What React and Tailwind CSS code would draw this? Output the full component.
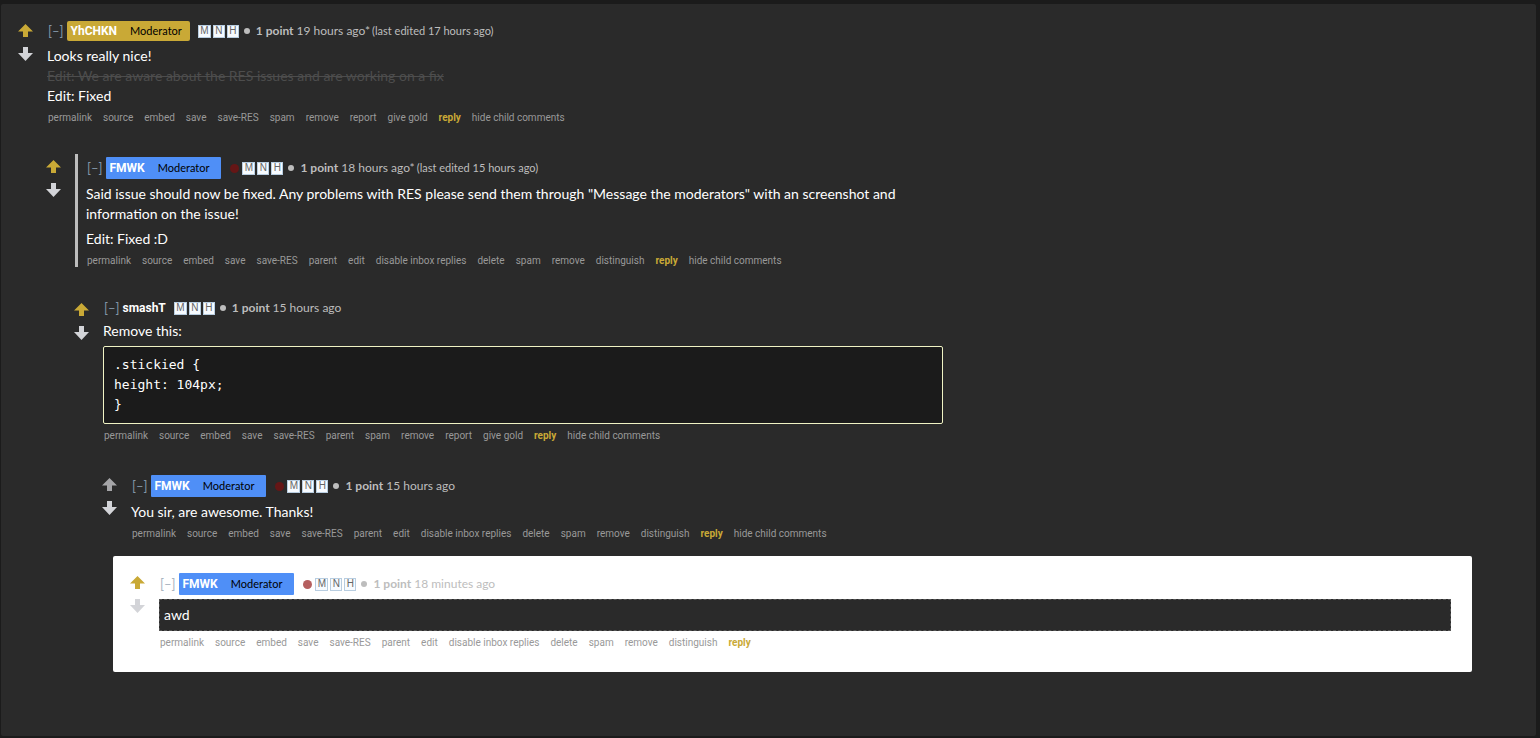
const MOD_ACTIONS = ['permalink', 'source', 'embed', 'save', 'save-RES', 'parent', 'edit', 'disable inbox replies', 'delete', 'spam', 'remove', 'distinguish', 'reply'];

const THREAD = {
  author: 'YhCHKN',
  badge: 'gold',
  time: '19 hours ago*',
  edited: '(last edited 17 hours ago)',
  vote: 'up',
  body: (
    <p>
      Looks really nice!
      <br />
      <del className="text-[#4d4d4d]">Edit: We are aware about the RES issues and are working on a fix</del>
      <br />
      Edit: Fixed
    </p>
  ),
  actions: ['permalink', 'source', 'embed', 'save', 'save-RES', 'spam', 'remove', 'report', 'give gold', 'reply', 'hide child comments'],
  child: {
    author: 'FMWK',
    badge: 'blue',
    tagged: true,
    barred: true,
    time: '18 hours ago*',
    edited: '(last edited 15 hours ago)',
    vote: 'up',
    body: (
      <>
        <p>
          Said issue should now be fixed. Any problems with RES please send them through "Message the moderators" with
          an screenshot and information on the issue!
        </p>
        <p>Edit: Fixed :D</p>
      </>
    ),
    actions: [...MOD_ACTIONS, 'hide child comments'],
    child: {
      author: 'smashT',
      time: '15 hours ago',
      vote: 'up',
      body: (
        <>
          <p>Remove this:</p>
          <pre className="rounded-xs border border-[#f0f3c4] bg-[#1b1b1b] px-[10px] py-2 font-['DejaVu_Sans_Mono',monospace] text-[13px] leading-5">
            {'.stickied {\nheight: 104px;\n}'}
          </pre>
        </>
      ),
      actions: ['permalink', 'source', 'embed', 'save', 'save-RES', 'parent', 'spam', 'remove', 'report', 'give gold', 'reply', 'hide child comments'],
      child: {
        author: 'FMWK',
        badge: 'blue',
        tagged: true,
        time: '15 hours ago',
        vote: 'none',
        body: <p>You sir, are awesome. Thanks!</p>,
        actions: [...MOD_ACTIONS, 'hide child comments'],
        child: {
          author: 'FMWK',
          badge: 'blue',
          tagged: true,
          isNew: true,
          time: '18 minutes ago',
          vote: 'up',
          body: <p>awd</p>,
          actions: MOD_ACTIONS,
        },
      },
    },
  },
};

const MOD_TOOLS = [
  { letter: 'M', width: 'w-[13px]' },
  { letter: 'N', width: 'w-[12px]' },
  { letter: 'H', width: 'w-[12px]' },
];

function Arrow({ down, className }) {
  return (
    <svg width="15" height="14" viewBox="0 0 15 14" className={className} fill="currentColor" aria-hidden="true">
      <path d={down ? 'M5 0h5v6h5L7.5 14 0 6h5z' : 'M7.5 0 15 7.5h-5V13H5V7.5H0z'} />
    </svg>
  );
}

function Votes({ vote }) {
  return (
    <div className="flex w-[15px] shrink-0 flex-col gap-[9px] pt-[3px]">
      <button type="button" aria-label="upvote">
        <Arrow className={vote === 'up' ? 'text-[#c9a936]' : 'text-[#a5a5a8]'} />
      </button>
      <button type="button" aria-label="downvote">
        <Arrow down className="text-[#d3d4d8]" />
      </button>
    </div>
  );
}

function Author({ name, badge }) {
  if (!badge) {
    return (
      <a href="#user" className="ml-[3px] font-['Roboto',sans-serif] font-bold text-white">
        {name}
      </a>
    );
  }
  return (
    <span
      className={
        badge === 'gold'
          ? 'ml-[3px] flex h-5 items-center gap-[13px] rounded-xs bg-[#c9a936] pr-2 pl-1'
          : 'ml-[3px] flex h-[22px] items-center gap-[13px] rounded-[1px] bg-[#4f8ff7] pr-3 pl-1'
      }
    >
      <a href="#user" className="font-['Roboto',sans-serif] font-bold text-white">
        {name}
      </a>
      <span className="text-[11px] text-black">Moderator</span>
    </span>
  );
}

function Tagline({ comment }) {
  const faded = comment.isNew;
  return (
    <div className="flex items-center pl-px text-[12px] leading-4 whitespace-nowrap text-[#bdbdbd]">
      <button type="button" className={faded ? 'text-[13px] text-[#a9b4c0]' : 'text-[13px] text-[#8296a8]'}>
        [–]
      </button>
      <Author name={comment.author} badge={comment.badge} />
      {comment.tagged && (
        <span className={faded ? 'ml-[9px] size-[9px] rounded-full bg-[#b55f5f]' : 'ml-[9px] size-[9px] rounded-full bg-[#651616]'} />
      )}
      <span
        className={
          comment.tagged
            ? "ml-[3px] flex gap-[2px] font-['Liberation_Sans',sans-serif] text-[10px] leading-none"
            : "ml-2 flex gap-[2px] font-['Liberation_Sans',sans-serif] text-[10px] leading-none"
        }
      >
        {MOD_TOOLS.map(({ letter, width }) => (
          <a
            key={letter}
            href="#mod"
            className={`flex h-[13px] items-center justify-center border border-[#b8cde0] bg-[#f7fbff] text-[#666] ${width}`}
          >
            {letter}
          </a>
        ))}
      </span>
      <span className="ml-[5px] size-[6px] rounded-full bg-[#bdbdbd]" />
      <span className="ml-[6px] font-bold">1 point</span>
      <time className="ml-[3px]">{comment.time}</time>
      {comment.edited && <span className="ml-[2px] text-[11px]">{comment.edited}</span>}
    </div>
  );
}

function Actions({ items }) {
  return (
    <ul className="flex flex-wrap gap-x-[11px] pt-[5px] pl-px font-['Roboto',sans-serif] text-[10px] leading-[13px] text-[#999]">
      {items.map((item) => (
        <li key={item}>
          <a href="#action" className={item === 'reply' ? 'font-bold text-[#c9a936]' : ''}>
            {item}
          </a>
        </li>
      ))}
    </ul>
  );
}

function Comment({ comment }) {
  return (
    <article>
      <div className={comment.isNew ? 'mt-4 -ml-[17px] flex gap-[14px] rounded-xs bg-white pt-[17px] pr-[21px] pb-[23px] pl-[17px]' : 'flex gap-[14px]'}>
        <Votes vote={comment.vote} />
        <div className={comment.barred ? '-mt-[3px] min-w-0 flex-1 border-l-[3px] border-[#bdbdbd] pt-[3px] pl-2' : 'min-w-0 flex-1'}>
          <Tagline comment={comment} />
          <div
            className={
              comment.isNew
                ? 'mt-1 border border-dashed border-[#555] bg-[#2a2a2a] px-1 py-[5px] text-[14px] leading-5 text-white'
                : 'mt-[5px] flex max-w-[840px] flex-col gap-[5px] text-[14px] leading-5 text-white'
            }
          >
            {comment.body}
          </div>
          <Actions items={comment.actions} />
        </div>
      </div>
      {comment.child && (
        <div className={comment.child.isNew ? 'pr-4 pl-7' : 'pt-[33px] pr-4 pl-7'}>
          <Comment comment={comment.child} />
        </div>
      )}
    </article>
  );
}

export default function App() {
  return (
    <div className="min-h-screen bg-[#1b1b1b] pt-1 pr-1 pb-[2px] pl-px font-['Lato',sans-serif]">
      <main className="min-h-[calc(100vh-6px)] rounded-xs bg-[#2a2a2a] pt-[17px] pb-16 pl-[17px]">
        <Comment comment={THREAD} />
      </main>
    </div>
  );
}
